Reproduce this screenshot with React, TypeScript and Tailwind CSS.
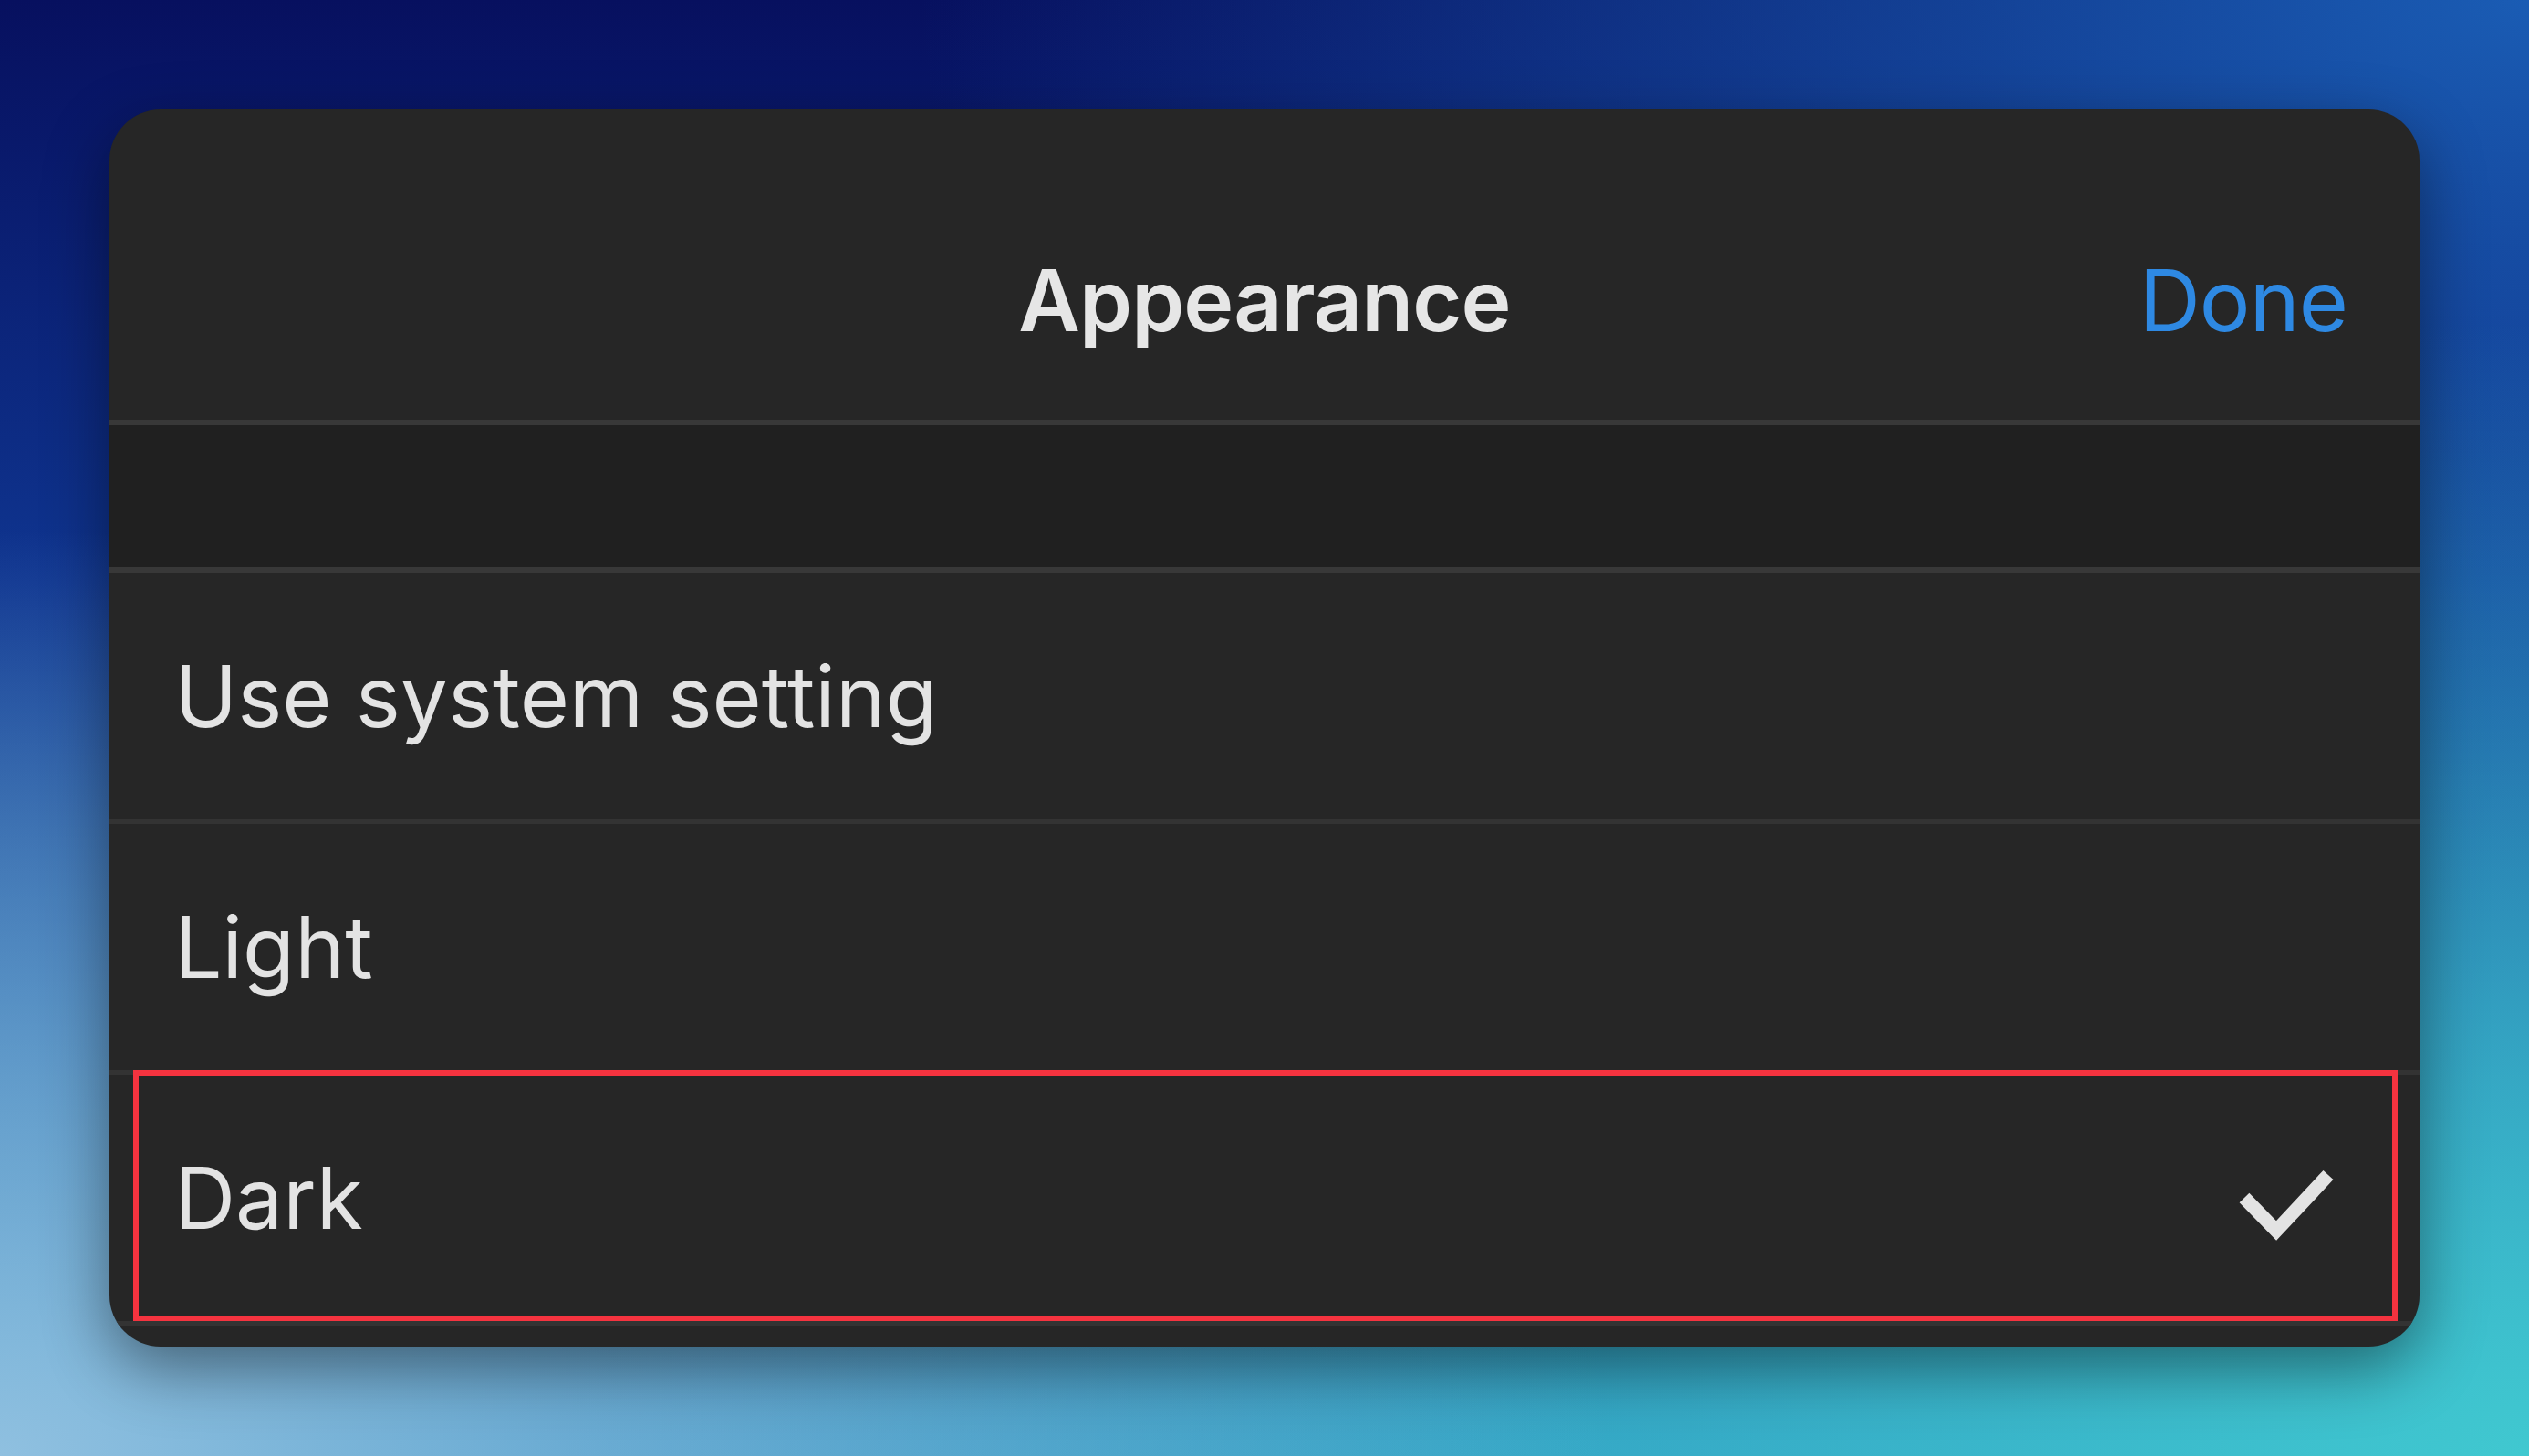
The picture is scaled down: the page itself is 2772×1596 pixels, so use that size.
import React from 'react';

const options = ['Use system setting', 'Light', 'Dark'];
const selected = 'Dark';

const Check: React.FC = () => (
  <svg width="110" height="100" viewBox="0 0 110 100" className="mr-[92px] shrink-0">
    <polyline
      points="10,50 45,86 102,25"
      fill="none"
      stroke="#e3e3e3"
      strokeWidth="15"
      strokeLinecap="butt"
      strokeLinejoin="miter"
    />
  </svg>
);

const App: React.FC = () => {
  return (
    <div className="min-h-screen w-full p-[120px] font-['Inter',sans-serif] bg-[radial-gradient(ellipse_at_0%_100%,#8fc0e0_0%,rgba(143,192,224,0)_45%),radial-gradient(ellipse_at_100%_100%,#40c8d0_0%,rgba(64,200,208,0)_55%),radial-gradient(ellipse_at_100%_0%,#1a5cb4_0%,rgba(26,92,180,0)_45%),linear-gradient(180deg,#07105f_0%,#0f3590_40%,#2068ac_75%,#2a88bc_100%)]">
      <div className="h-[1356px] w-full overflow-hidden rounded-[56px] bg-[#262626] shadow-[0_24px_70px_rgba(0,0,0,0.45)]">
        {/* nav bar */}
        <div className="grid h-[346px] grid-cols-[1fr_auto_1fr] items-start border-b-[6px] border-[#383838] pt-[163px]">
          <div />
          <h1 className="text-[93px] font-semibold leading-none tracking-[-0.01em] text-[#e6e6e6]">
            Appearance
          </h1>
          <button className="justify-self-end pr-[79px] text-[93px] leading-none tracking-[-0.01em] text-[#2e89e3]">
            Done
          </button>
        </div>

        {/* grouped section spacer */}
        <div className="h-[162px] border-b-[6px] border-[#383838] bg-[#202020]" />

        {options.map((label) => (
          <div
            key={label}
            className="relative flex h-[275px] items-center justify-between border-b-[5px] border-[#333333] pl-[71px]"
          >
            <span className="text-[93px] leading-none text-[#e3e3e3]">{label}</span>
            {label === selected && <Check />}
            {label === selected && (
              <div className="pointer-events-none absolute bottom-0 left-[26px] right-[24px] top-[-5px] border-[6px] border-[#f5333f]" />
            )}
          </div>
        ))}
      </div>
    </div>
  );
};

export default App;
